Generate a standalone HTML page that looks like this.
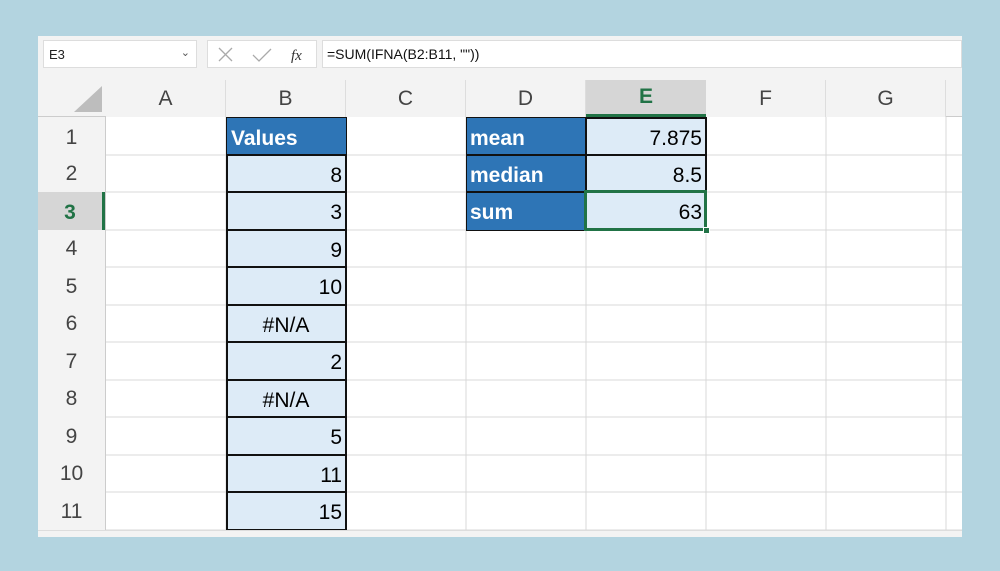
<!DOCTYPE html><html><head><style>
body{margin:0;width:1000px;height:571px;background:#b3d4e0;font-family:"Liberation Sans",sans-serif;position:relative;overflow:hidden}
.a{position:absolute;box-sizing:border-box}
.sheet{left:38px;top:36px;width:924px;height:501px;background:#fff}
.hd{background:#f3f3f3;color:#444;font-size:21px;display:flex;align-items:center;justify-content:center}
.cell{font-size:21px;display:flex;align-items:center;padding-top:4px}
</style></head><body>
<div class="a sheet"></div>
<div class="a" style="left:38px;top:36px;width:924px;height:44px;background:#f3f3f3"></div>
<div class="a" style="left:43px;top:40px;width:154px;height:28px;background:#fff;border:1px solid #ddd;font-size:13px;padding:6px 0 0 5px;color:#222">E3<span style="position:absolute;right:6px;top:5px;font-size:11px;color:#555">⌄</span></div>
<div class="a" style="left:207px;top:40px;width:110px;height:28px;background:#fff;border:1px solid #ddd"></div>
<svg class="a" style="left:217px;top:46px" width="100" height="18"><path d="M2 2L15 15M15 2L2 15" stroke="#aaa" stroke-width="1.3"/><path d="M36 9L42 15L54 3" stroke="#aaa" stroke-width="1.3" fill="none"/><text x="74" y="14" font-family="Liberation Serif" font-style="italic" font-size="15" fill="#333">fx</text></svg>
<div class="a" style="left:322px;top:40px;width:640px;height:28px;background:#fff;border:1px solid #ddd;font-size:14px;padding:5px 0 0 4px;color:#111">=SUM(IFNA(B2:B11, ""))</div>
<svg class="a" style="left:0;top:0" width="1000" height="571">
<g stroke="#d8d8d8" stroke-width="1">
<line x1="226" y1="80" x2="226" y2="530"/><line x1="346" y1="80" x2="346" y2="530"/><line x1="466" y1="80" x2="466" y2="530"/><line x1="586" y1="80" x2="586" y2="530"/><line x1="706" y1="80" x2="706" y2="530"/><line x1="826" y1="80" x2="826" y2="530"/><line x1="946" y1="80" x2="946" y2="530"/>
<line x1="38" y1="155" x2="962" y2="155"/><line x1="38" y1="192" x2="962" y2="192"/><line x1="38" y1="230" x2="962" y2="230"/><line x1="38" y1="267" x2="962" y2="267"/><line x1="38" y1="305" x2="962" y2="305"/><line x1="38" y1="342" x2="962" y2="342"/><line x1="38" y1="380" x2="962" y2="380"/><line x1="38" y1="417" x2="962" y2="417"/><line x1="38" y1="455" x2="962" y2="455"/><line x1="38" y1="492" x2="962" y2="492"/><line x1="38" y1="530" x2="962" y2="530"/>
</g></svg>
<div class="a" style="left:38px;top:80px;width:924px;height:37px;background:#f3f3f3;border-bottom:1px solid #ccc"></div>
<div class="a" style="left:38px;top:117px;width:68px;height:413px;background:#f3f3f3;border-right:1px solid #ccc"></div>
<svg class="a" style="left:72px;top:84px" width="32" height="30"><polygon points="30,2 30,28 2,28" fill="#bdbdbd"/></svg>
<div class="a hd" style="left:106px;top:80px;width:120px;height:37px;border-right:1px solid #ddd">A</div>
<div class="a hd" style="left:226px;top:80px;width:120px;height:37px;border-right:1px solid #ddd">B</div>
<div class="a hd" style="left:346px;top:80px;width:120px;height:37px;border-right:1px solid #ddd">C</div>
<div class="a hd" style="left:466px;top:80px;width:120px;height:37px;border-right:1px solid #ddd">D</div>
<div class="a hd" style="left:586px;top:80px;width:120px;height:37px;background:#d6d6d6;color:#217346;font-weight:bold;border-bottom:3px solid #217346">E</div>
<div class="a hd" style="left:706px;top:80px;width:120px;height:37px;border-right:1px solid #ddd">F</div>
<div class="a hd" style="left:826px;top:80px;width:120px;height:37px;border-right:1px solid #ddd">G</div>
<div class="a hd" style="left:38px;top:119px;width:67px;height:38px">1</div>
<div class="a hd" style="left:38px;top:157px;width:67px;height:34px">2</div>
<div class="a hd" style="left:38px;top:192px;width:67px;height:38px;background:#d6d6d6;color:#217346;font-weight:bold;border-right:3px solid #217346;padding-top:4px">3</div>
<div class="a hd" style="left:38px;top:232px;width:67px;height:34px">4</div>
<div class="a hd" style="left:38px;top:269px;width:67px;height:35px">5</div>
<div class="a hd" style="left:38px;top:307px;width:67px;height:34px">6</div>
<div class="a hd" style="left:38px;top:344px;width:67px;height:35px">7</div>
<div class="a hd" style="left:38px;top:382px;width:67px;height:34px">8</div>
<div class="a hd" style="left:38px;top:419px;width:67px;height:35px">9</div>
<div class="a hd" style="left:38px;top:457px;width:67px;height:34px">10</div>
<div class="a hd" style="left:38px;top:494px;width:67px;height:35px">11</div>
<div class="a" style="left:226px;top:117px;width:121px;height:414px;border:2px solid #111;background:#ddebf7"></div>
<div class="a cell" style="left:227px;top:118px;width:119px;height:37px;background:#2e75b6;color:#fff;font-weight:bold;padding-left:4px">Values</div>
<svg class="a" style="left:0;top:0" width="1000" height="571"><g stroke="#111" stroke-width="2">
<line x1="226" y1="155" x2="347" y2="155"/><line x1="226" y1="192" x2="347" y2="192"/><line x1="226" y1="230" x2="347" y2="230"/><line x1="226" y1="267" x2="347" y2="267"/><line x1="226" y1="305" x2="347" y2="305"/><line x1="226" y1="342" x2="347" y2="342"/><line x1="226" y1="380" x2="347" y2="380"/><line x1="226" y1="417" x2="347" y2="417"/><line x1="226" y1="455" x2="347" y2="455"/><line x1="226" y1="492" x2="347" y2="492"/>
</g></svg>
<div class="a cell" style="left:226px;top:155px;width:116px;height:37px;justify-content:flex-end">8</div>
<div class="a cell" style="left:226px;top:192px;width:116px;height:38px;justify-content:flex-end">3</div>
<div class="a cell" style="left:226px;top:230px;width:116px;height:37px;justify-content:flex-end">9</div>
<div class="a cell" style="left:226px;top:267px;width:116px;height:38px;justify-content:flex-end">10</div>
<div class="a cell" style="left:226px;top:305px;width:120px;height:37px;justify-content:center">#N/A</div>
<div class="a cell" style="left:226px;top:342px;width:116px;height:38px;justify-content:flex-end">2</div>
<div class="a cell" style="left:226px;top:380px;width:120px;height:37px;justify-content:center">#N/A</div>
<div class="a cell" style="left:226px;top:417px;width:116px;height:38px;justify-content:flex-end">5</div>
<div class="a cell" style="left:226px;top:455px;width:116px;height:37px;justify-content:flex-end">11</div>
<div class="a cell" style="left:226px;top:492px;width:116px;height:38px;justify-content:flex-end">15</div>
<div class="a" style="left:466px;top:117px;width:241px;height:114px;border:2px solid #111;background:#ddebf7"></div>
<div class="a" style="left:467px;top:118px;width:119px;height:112px;background:#2e75b6"></div>
<svg class="a" style="left:0;top:0" width="1000" height="571"><g stroke="#111" stroke-width="2"><line x1="466" y1="155" x2="707" y2="155"/><line x1="466" y1="192" x2="707" y2="192"/><line x1="586" y1="117" x2="586" y2="230"/></g></svg>
<div class="a cell" style="left:470px;top:118px;height:37px;color:#fff;font-weight:bold">mean</div>
<div class="a cell" style="left:470px;top:155px;height:37px;color:#fff;font-weight:bold">median</div>
<div class="a cell" style="left:470px;top:192px;height:38px;color:#fff;font-weight:bold">sum</div>
<div class="a cell" style="left:586px;top:118px;width:116px;height:37px;justify-content:flex-end">7.875</div>
<div class="a cell" style="left:586px;top:155px;width:116px;height:37px;justify-content:flex-end">8.5</div>
<div class="a" style="left:584px;top:190px;width:123px;height:41px;border:3px solid #217346"></div>
<div class="a cell" style="left:586px;top:192px;width:116px;height:38px;justify-content:flex-end">63</div>
<div class="a" style="left:703px;top:227px;width:7px;height:7px;background:#217346;border:1px solid #fff"></div>
<div class="a" style="left:38px;top:530px;width:924px;height:7px;background:#f3f3f3;border-top:1px solid #ddd"></div>
</body></html>
